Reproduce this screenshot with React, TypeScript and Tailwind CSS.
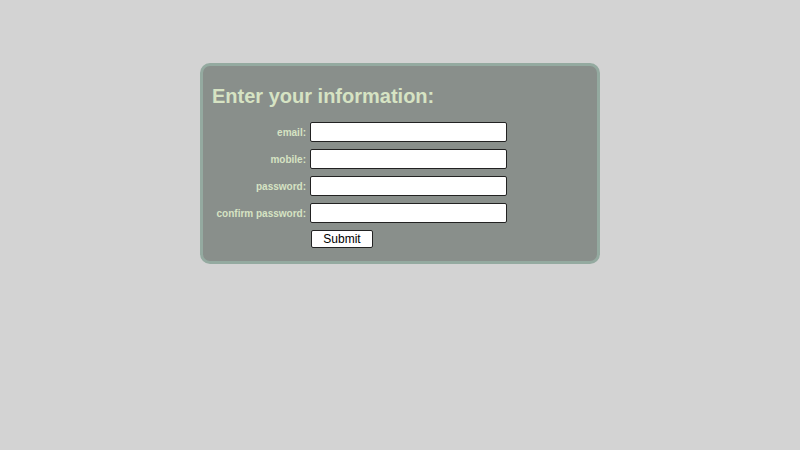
// Sign-up form card on a grey page.
const FIELDS = [
  { key: "email", label: "email:", type: "email" },
  { key: "mobile", label: "mobile:", type: "tel" },
  { key: "password", label: "password:", type: "password" },
  { key: "confirm", label: "confirm password:", type: "password" },
];

export default function App() {
  return (
    <div className="min-h-[450px] bg-[#d3d3d3] pt-[63px] font-['Liberation_Sans',Arial,sans-serif]">
      <div className="mx-auto w-[400px] rounded-[10px] border-[3px] border-[#94aaa0] bg-[#898f8b] px-[9px] pb-[13px] pt-[19px]">
        <h1 className="text-[20px] font-bold leading-[23px] text-[#d6e3c3]">Enter your information:</h1>
        <form className="mt-[14px] grid grid-cols-[94px_197px] gap-x-[4px] gap-y-[7px]" onSubmit={(e) => e.preventDefault()}>
          {FIELDS.map((f) => (
            <div key={f.key} className="contents">
              <label htmlFor={f.key}
                className="flex items-center justify-end whitespace-nowrap text-[10px] font-bold text-[#d6e3c3]">
                {f.label}
              </label>
              <input id={f.key} type={f.type}
                className="h-[20px] rounded-[2px] border border-[#222] bg-white px-1 text-[13px] outline-none" />
            </div>
          ))}
          <div />
          <button type="submit"
            className="ml-px block h-[18px] w-[62px] rounded-[2px] border border-[#222] bg-white text-[12px] leading-none text-black">
            Submit
          </button>
        </form>
      </div>
    </div>
  );
}
